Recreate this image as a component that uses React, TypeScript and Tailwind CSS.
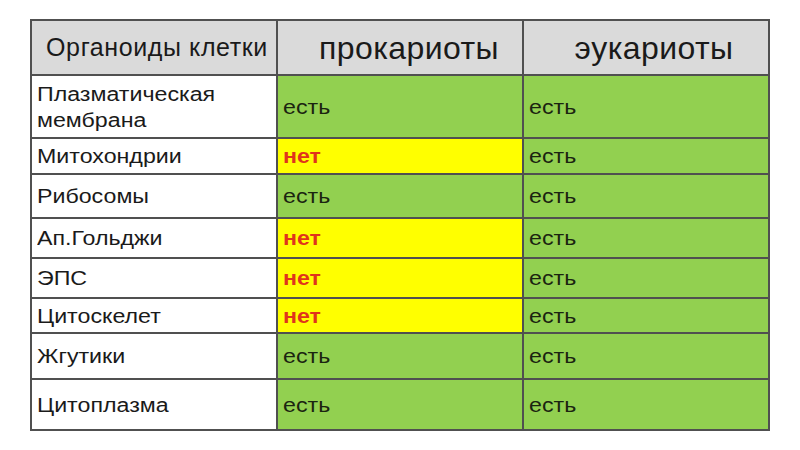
import React from 'react';

type Cell = { text: string; no?: boolean };

interface Row {
  name: string[];
  pro: Cell;
  eu: Cell;
}

const rows: Row[] = [
  { name: ['Плазматическая', 'мембрана'], pro: { text: 'есть' }, eu: { text: 'есть' } },
  { name: ['Митохондрии'], pro: { text: 'нет', no: true }, eu: { text: 'есть' } },
  { name: ['Рибосомы'], pro: { text: 'есть' }, eu: { text: 'есть' } },
  { name: ['Ап.Гольджи'], pro: { text: 'нет', no: true }, eu: { text: 'есть' } },
  { name: ['ЭПС'], pro: { text: 'нет', no: true }, eu: { text: 'есть' } },
  { name: ['Цитоскелет'], pro: { text: 'нет', no: true }, eu: { text: 'есть' } },
  { name: ['Жгутики'], pro: { text: 'есть' }, eu: { text: 'есть' } },
  { name: ['Цитоплазма'], pro: { text: 'есть' }, eu: { text: 'есть' } },
];

// the source picture is a bit stretched sideways, so body text gets widened
const Wide = ({ children }: { children: React.ReactNode }) => (
  <span className="inline-block origin-left scale-x-[1.16]">{children}</span>
);

const ValueCell = ({ cell }: { cell: Cell }) =>
  cell.no ? (
    <div className="flex items-center bg-[#ffff00] pl-[5px] text-[20px] font-bold text-[#e0341c]">
      <Wide>{cell.text}</Wide>
    </div>
  ) : (
    <div className="flex items-center bg-[#92d050] pl-[5px] text-[20px] text-[#1b2410]">
      <Wide>{cell.text}</Wide>
    </div>
  );

const App = () => {
  return (
    <div
      className="h-[450px] w-[800px] bg-white pl-[30px] pt-[19px]"
      style={{ fontFamily: '"Liberation Sans", Arial, sans-serif' }}
    >
      <div className="grid w-[740px] grid-cols-[244px_244px_244px] grid-rows-[53px_61px_34px_42px_38px_38px_33px_44px_49px] gap-[2px] border-2 border-[#505050] bg-[#505050]">
        <div className="flex items-center justify-center bg-[#dadada] pl-[6px] text-[25px] tracking-[0.6px] text-[#1a1a1a]">
          Органоиды клетки
        </div>
        <div className="flex items-center justify-center bg-[#dadada] pl-[18px] text-[32px] tracking-[0.4px] text-[#1a1a1a]">
          прокариоты
        </div>
        <div className="flex items-center justify-center bg-[#dadada] pl-[16px] text-[32px] tracking-[0.4px] text-[#1a1a1a]">
          эукариоты
        </div>
        {rows.map((r) => (
          <React.Fragment key={r.name.join(' ')}>
            <div className="flex flex-col items-start justify-center bg-white pl-[5px] text-[20px] leading-[26px] text-[#1a1a1a]">
              {r.name.map((l) => (
                <Wide key={l}>{l}</Wide>
              ))}
            </div>
            <ValueCell cell={r.pro} />
            <ValueCell cell={r.eu} />
          </React.Fragment>
        ))}
      </div>
    </div>
  );
};

export default App;
